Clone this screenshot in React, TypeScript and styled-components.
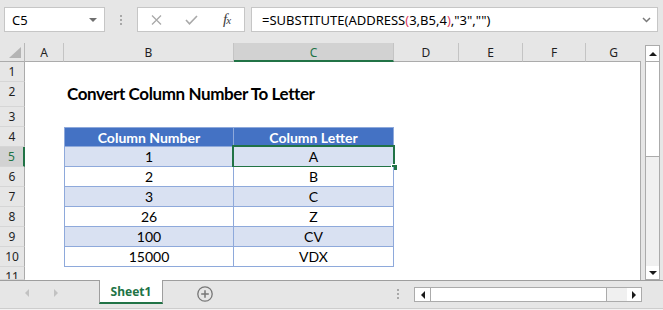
import React from "react";
import styled, { createGlobalStyle } from "styled-components";

const GlobalStyle = createGlobalStyle`
  html, body {
    margin: 0;
    padding: 0;
  }
  body {
    background: #e6e6e6;
    font-family: "Noto Sans", "Open Sans", sans-serif;
  }
`;

const GREEN = "#217346";
const CHROME = "#e6e6e6";

const Window = styled.div`
  width: 663px;
  height: 310px;
  display: flex;
  flex-direction: column;
  background: ${CHROME};
  overflow: hidden;
`;

// ---------- formula bar ----------

const FormulaBar = styled.div`
  height: 43px;
  box-sizing: border-box;
  padding: 7px 5px 0 4px;
  display: flex;
  align-items: flex-start;
`;

const NameBox = styled.div`
  width: 101px;
  height: 25px;
  box-sizing: border-box;
  background: #fff;
  border: 1px solid #c6c6c6;
  display: flex;
  align-items: center;
  justify-content: space-between;
  padding: 0 7px 0 7px;
  font-size: 13px;
  color: #000;
`;

const DropArrow = styled.span`
  width: 0;
  height: 0;
  border-left: 4px solid transparent;
  border-right: 4px solid transparent;
  border-top: 4px solid #6f6f6f;
`;

const Grip = styled.div<{ $w: number; $h: number }>`
  width: ${(p) => p.$w}px;
  height: ${(p) => p.$h}px;
  display: flex;
  align-items: center;
  justify-content: center;
`;

const GripDots = styled.span`
  display: flex;
  flex-direction: column;
  gap: 2px;
  & > i {
    display: block;
    width: 2px;
    height: 2px;
    background: #a8a8a8;
  }
`;

const FxBox = styled.div`
  width: 108px;
  height: 25px;
  box-sizing: border-box;
  background: #fff;
  border: 1px solid #c6c6c6;
  display: flex;
  align-items: center;
  padding-left: 1px;
  margin-right: 6px;
`;

const FxSlot = styled.div`
  width: 35px;
  height: 23px;
  display: flex;
  align-items: center;
  justify-content: center;
`;

const FxGlyph = styled.span`
  font-family: "Liberation Serif", "DejaVu Serif", serif;
  font-style: italic;
  font-size: 15px;
  color: #3c3c3c;
  letter-spacing: -1px;
  & > small {
    font-size: 11px;
  }
`;

const FormulaBox = styled.div`
  flex: 1;
  height: 25px;
  box-sizing: border-box;
  background: #fff;
  border: 1px solid #c6c6c6;
  display: flex;
  align-items: center;
  justify-content: space-between;
  padding: 0 6px 0 10px;
  font-size: 13px;
  color: #000;
  white-space: nowrap;
`;

const Paren = styled.span`
  color: #e0405e;
`;

// ---------- grid ----------

const Main = styled.div`
  height: 237px;
  display: flex;
`;

const Sheet = styled.div`
  width: 641px;
  display: grid;
  grid-template-columns: 25px 39px 170px 160px 65px 64px 63px 55px;
  grid-template-rows: 19px 20px 25px repeat(8, 20px) 13px;
  background: #fff;
  font-family: "Lato", "Open Sans", sans-serif;
`;

const Corner = styled.div`
  background: ${CHROME};
  border-right: 1px solid #b8b8b8;
  border-bottom: 1px solid #ababab;
  position: relative;
  &::after {
    content: "";
    position: absolute;
    right: 3px;
    bottom: 3px;
    width: 0;
    height: 0;
    border-left: 12px solid transparent;
    border-bottom: 11px solid #b4b4b4;
  }
`;

const ColHeader = styled.div<{ $active?: boolean; $last?: boolean }>`
  background: ${(p) => (p.$active ? "#d2d2d2" : CHROME)};
  border-right: ${(p) => (p.$last ? "none" : "1px solid #c4c4c4")};
  border-bottom: ${(p) => (p.$active ? `2px solid ${GREEN}` : "1px solid #ababab")};
  display: flex;
  align-items: center;
  justify-content: center;
  font-family: "Noto Sans", "Open Sans", sans-serif;
  font-size: 12px;
  color: ${(p) => (p.$active ? GREEN : "#1f1f1f")};
  padding-top: 1px;
`;

const RowHeader = styled.div<{ $active?: boolean }>`
  background: ${(p) => (p.$active ? "#d2d2d2" : CHROME)};
  border-right: ${(p) => (p.$active ? `2px solid ${GREEN}` : "1px solid #ababab")};
  border-bottom: 1px solid #d6d6d6;
  display: flex;
  align-items: flex-start;
  justify-content: center;
  overflow: hidden;
  font-family: "Noto Sans", "Open Sans", sans-serif;
  font-size: 12px;
  line-height: 20px;
  color: ${(p) => (p.$active ? GREEN : "#1f1f1f")};
`;

const Blank = styled.div<{ $edge?: boolean }>`
  background: #fff;
  border-right: ${(p) => (p.$edge ? "1px solid #ababab" : "none")};
`;

const TitleCell = styled.div`
  display: flex;
  align-items: flex-end;
  padding: 0 0 3px 3px;
  white-space: nowrap;
  font-size: 17px;
  letter-spacing: -0.4px;
  font-weight: 700;
  color: #000;
  overflow: visible;
  z-index: 1;
`;

const TableCell = styled.div<{ $head?: boolean; $band?: boolean; $first?: boolean; $top?: boolean }>`
  position: relative;
  box-sizing: border-box;
  background: ${(p) => (p.$head ? "#4472c4" : p.$band ? "#d9e1f2" : "#fff")};
  border-right: 1px solid #8ea9db;
  border-bottom: 1px solid #8ea9db;
  border-left: ${(p) => (p.$first ? "1px solid #8ea9db" : "none")};
  border-top: ${(p) => (p.$top ? "1px solid #8ea9db" : "none")};
  display: flex;
  align-items: center;
  justify-content: center;
  font-size: 14px;
  font-weight: ${(p) => (p.$head ? 700 : 400)};
  color: ${(p) => (p.$head ? "#fff" : "#000")};
`;

const Selection = styled.div`
  position: absolute;
  left: -2px;
  top: -2px;
  right: -2px;
  bottom: -2px;
  border: 2px solid ${GREEN};
  pointer-events: none;
  &::after {
    content: "";
    position: absolute;
    right: -5px;
    bottom: -5px;
    width: 5px;
    height: 5px;
    background: ${GREEN};
    border: 1px solid #fff;
  }
`;

// ---------- scrollbars ----------

const VScrollColumn = styled.div`
  width: 22px;
  box-sizing: border-box;
  padding: 2px 0 0 4px;
  background: ${CHROME};
`;

const VScroll = styled.div`
  width: 15px;
  height: 235px;
  box-sizing: border-box;
  border: 1px solid #ababab;
  background: #f0f0f0;
  display: flex;
  flex-direction: column;
`;

const HScroll = styled.div`
  width: 228px;
  height: 15px;
  box-sizing: border-box;
  border: 1px solid #ababab;
  background: #f0f0f0;
  display: flex;
  margin-top: 6px;
`;

const ScrollBtn = styled.div<{ $size: number; $vertical?: boolean }>`
  flex: 0 0 ${(p) => p.$size}px;
  background: #fff;
  display: flex;
  align-items: center;
  justify-content: center;
`;

const Thumb = styled.div<{ $size: number; $vertical?: boolean }>`
  flex: 0 0 ${(p) => p.$size}px;
  box-sizing: border-box;
  background: #fff;
  ${(p) => (p.$vertical ? "border-top: 1px solid #ababab; border-bottom: 1px solid #ababab;" : "border-left: 1px solid #ababab; border-right: 1px solid #ababab;")}
`;

const Tri = styled.span<{ $dir: "up" | "down" | "left" | "right"; $color?: string }>`
  width: 0;
  height: 0;
  ${(p) => {
    const c = p.$color || "#1a1a1a";
    switch (p.$dir) {
      case "up":
        return `border-left: 4px solid transparent; border-right: 4px solid transparent; border-bottom: 4px solid ${c};`;
      case "down":
        return `border-left: 4px solid transparent; border-right: 4px solid transparent; border-top: 4px solid ${c};`;
      case "left":
        return `border-top: 4px solid transparent; border-bottom: 4px solid transparent; border-right: 4px solid ${c};`;
      default:
        return `border-top: 4px solid transparent; border-bottom: 4px solid transparent; border-left: 4px solid ${c};`;
    }
  }}
`;

// ---------- sheet tabs ----------

const TabBar = styled.div`
  height: 29px;
  box-sizing: border-box;
  border-top: 1px solid #9e9e9e;
  border-bottom: 1px solid #cdcdcd;
  display: flex;
  align-items: flex-start;
`;

const StatusLine = styled.div`
  height: 1px;
  background: #f2f2f2;
`;

const TabNav = styled.div`
  width: 99px;
  height: 24px;
  display: flex;
  align-items: center;
  padding-left: 25px;
  box-sizing: border-box;
  gap: 25px;
`;

const SheetTab = styled.div`
  width: 64px;
  height: 24px;
  margin-top: -1px;
  box-sizing: border-box;
  background: #fff;
  border-left: 1px solid #9e9e9e;
  border-right: 1px solid #9e9e9e;
  border-bottom: 2px solid ${GREEN};
  display: flex;
  align-items: center;
  justify-content: center;
  font-size: 12px;
  font-weight: 700;
  color: ${GREEN};
`;

const AddSheet = styled.div`
  margin: 4px 0 0 34px;
  width: 16px;
  height: 16px;
`;

const Spacer = styled.div`
  flex: 1;
`;

const rowNumbers = [1, 2, 3, 4, 5, 6, 7, 8, 9, 10, 11];

const data: [string, string][] = [
  ["1", "A"],
  ["2", "B"],
  ["3", "C"],
  ["26", "Z"],
  ["100", "CV"],
  ["15000", "VDX"],
];

const colLetters = ["A", "B", "C", "D", "E", "F", "G"];

function renderRow(n: number) {
  const cells: React.ReactNode[] = [];
  cells.push(
    <RowHeader key={`h${n}`} $active={n === 5}>
      {n}
    </RowHeader>
  );
  if (n === 2) {
    cells.push(<Blank key={`${n}a`} />);
    cells.push(<TitleCell key={`${n}b`}>Convert Column Number To Letter</TitleCell>);
    for (let i = 0; i < 4; i++) cells.push(<Blank key={`${n}x${i}`} />);
    cells.push(<Blank key={`${n}g`} $edge />);
    return cells;
  }
  if (n >= 4 && n <= 10) {
    const head = n === 4;
    const d = head ? ["Column Number", "Column Letter"] : data[n - 5];
    const band = n % 2 === 1;
    cells.push(<Blank key={`${n}a`} />);
    cells.push(
      <TableCell key={`${n}b`} $head={head} $band={band} $first $top={head}>
        {d[0]}
      </TableCell>
    );
    cells.push(
      <TableCell key={`${n}c`} $head={head} $band={band} $top={head}>
        {d[1]}
        {n === 5 && <Selection />}
      </TableCell>
    );
    for (let i = 0; i < 3; i++) cells.push(<Blank key={`${n}x${i}`} />);
    cells.push(<Blank key={`${n}g`} $edge />);
    return cells;
  }
  for (let i = 0; i < 6; i++) cells.push(<Blank key={`${n}x${i}`} />);
  cells.push(<Blank key={`${n}g`} $edge />);
  return cells;
}

export default function App() {
  return (
    <Window>
      <GlobalStyle />
      <FormulaBar>
        <NameBox>
          C5
          <DropArrow />
        </NameBox>
        <Grip $w={32} $h={25}>
          <GripDots>
            <i />
            <i />
            <i />
          </GripDots>
        </Grip>
        <FxBox>
          <FxSlot>
            <svg width="11" height="10" viewBox="0 0 11 10">
              <path d="M1 0.5 L10 9.5 M10 0.5 L1 9.5" stroke="#a9a9a9" strokeWidth="1.3" fill="none" />
            </svg>
          </FxSlot>
          <FxSlot>
            <svg width="13" height="10" viewBox="0 0 13 10">
              <path d="M1 5 L4.5 8.8 L12 1" stroke="#a9a9a9" strokeWidth="1.6" fill="none" />
            </svg>
          </FxSlot>
          <FxSlot>
            <FxGlyph>
              f<small>x</small>
            </FxGlyph>
          </FxSlot>
        </FxBox>
        <FormulaBox>
          <span>
            =SUBSTITUTE(ADDRESS<Paren>(</Paren>3,B5,4<Paren>)</Paren>,"3","")
          </span>
          <svg width="9" height="6" viewBox="0 0 9 6">
            <path d="M1 1 L4.5 4.5 L8 1" stroke="#7a7a7a" strokeWidth="1.5" fill="none" />
          </svg>
        </FormulaBox>
      </FormulaBar>

      <Main>
        <Sheet>
          <Corner />
          {colLetters.map((c, i) => (
            <ColHeader key={c} $active={c === "C"} $last={i === colLetters.length - 1}>
              {c}
            </ColHeader>
          ))}
          {rowNumbers.map((n) => renderRow(n))}
        </Sheet>
        <VScrollColumn>
          <VScroll>
            <ScrollBtn $size={15} $vertical>
              <Tri $dir="up" />
            </ScrollBtn>
            <Thumb $size={96} $vertical />
            <Spacer />
            <ScrollBtn $size={13} $vertical>
              <Tri $dir="down" />
            </ScrollBtn>
          </VScroll>
        </VScrollColumn>
      </Main>

      <TabBar>
        <TabNav>
          <Tri $dir="left" $color="#c2c2c2" />
          <Tri $dir="right" $color="#c2c2c2" />
        </TabNav>
        <SheetTab>Sheet1</SheetTab>
        <AddSheet>
          <svg width="16" height="16" viewBox="0 0 16 16">
            <circle cx="8" cy="8" r="7.2" stroke="#777" strokeWidth="1.3" fill="none" />
            <path d="M8 4.2 V11.8 M4.2 8 H11.8" stroke="#777" strokeWidth="1.5" />
          </svg>
        </AddSheet>
        <Spacer />
        <Grip $w={32} $h={26}>
          <GripDots>
            <i />
            <i />
            <i />
          </GripDots>
        </Grip>
        <HScroll>
          <ScrollBtn $size={15}>
            <Tri $dir="left" />
          </ScrollBtn>
          <Thumb $size={177} />
          <Spacer />
          <ScrollBtn $size={14}>
            <Tri $dir="right" />
          </ScrollBtn>
        </HScroll>
        <div style={{ width: 21 }} />
      </TabBar>
      <StatusLine />
    </Window>
  );
}
